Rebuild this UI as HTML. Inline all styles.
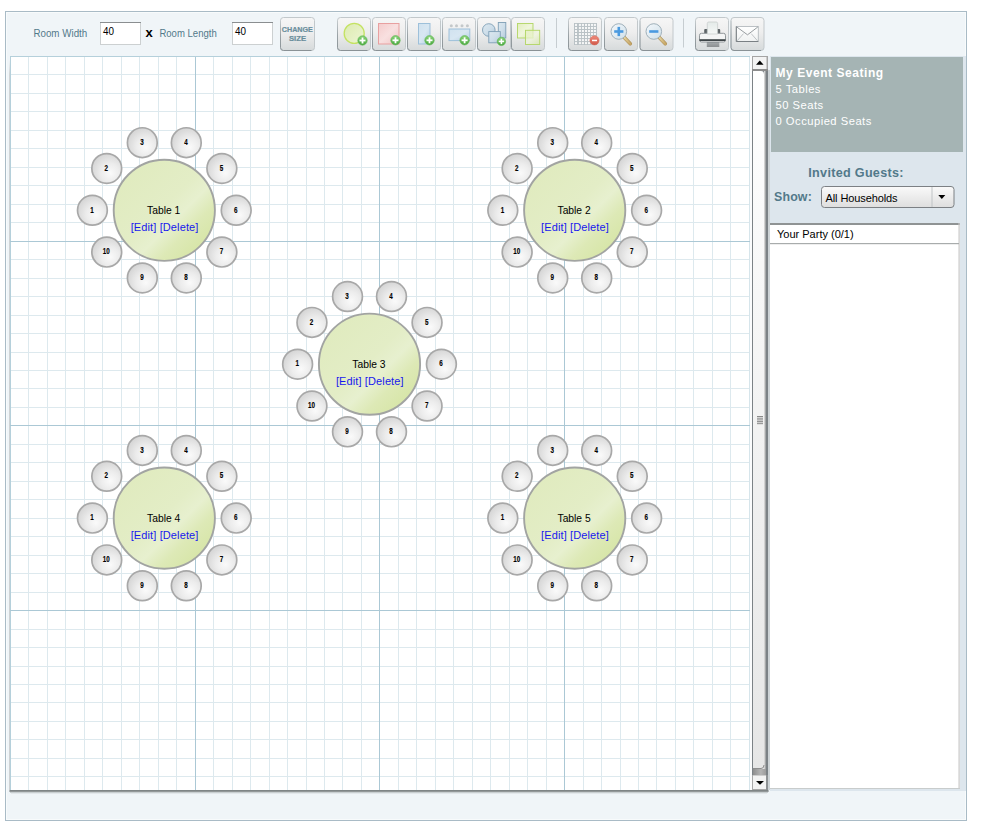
<!DOCTYPE html>
<html><head><meta charset="utf-8"><style>
html,body{margin:0;padding:0;background:#fff;width:994px;height:822px;overflow:hidden}
svg{display:block}
</style></head><body>
<svg width="994" height="822" viewBox="0 0 994 822">

<defs>
 <linearGradient id="btn" x1="0" y1="0" x2="0" y2="1">
  <stop offset="0" stop-color="#f6f6f6"/><stop offset="0.45" stop-color="#eeeeee"/><stop offset="1" stop-color="#d6dadb"/>
 </linearGradient>
 <linearGradient id="bedge" x1="0" y1="0" x2="0" y2="1">
  <stop offset="0" stop-color="#c4cacd"/><stop offset="0.5" stop-color="#9aa2a6"/><stop offset="1" stop-color="#8a9296"/>
 </linearGradient>
 <linearGradient id="paper" x1="0" y1="0" x2="0" y2="1">
  <stop offset="0" stop-color="#e4eae8"/><stop offset="1" stop-color="#f6f8f7"/>
 </linearGradient>
 <linearGradient id="tray" x1="0" y1="0" x2="0" y2="1">
  <stop offset="0" stop-color="#6a7074"/><stop offset="0.3" stop-color="#a4a8aa"/><stop offset="1" stop-color="#8a8e90"/>
 </linearGradient>
 <linearGradient id="tbl" x1="0" y1="0" x2="1" y2="1">
  <stop offset="0" stop-color="#dfeabc"/><stop offset="0.48" stop-color="#e3edc6"/>
  <stop offset="0.6" stop-color="#e7f0cf"/><stop offset="0.72" stop-color="#dde9b6"/><stop offset="1" stop-color="#d1e29a"/>
 </linearGradient>
 <radialGradient id="seat" cx="0.6" cy="0.62" r="0.62" fx="0.62" fy="0.66">
  <stop offset="0" stop-color="#fafafa"/><stop offset="0.5" stop-color="#ececec"/><stop offset="1" stop-color="#d6d6d6"/>
 </radialGradient>
 <linearGradient id="gcirc" x1="0" y1="0" x2="1" y2="1">
  <stop offset="0" stop-color="#dcebb0"/><stop offset="1" stop-color="#eef5d4"/>
 </linearGradient>
 <linearGradient id="pink" x1="0" y1="0" x2="1" y2="1">
  <stop offset="0" stop-color="#f4cccc"/><stop offset="0.5" stop-color="#f8e0e0"/><stop offset="1" stop-color="#f0c4c4"/>
 </linearGradient>
 <linearGradient id="blue" x1="0" y1="0" x2="1" y2="1">
  <stop offset="0" stop-color="#d0e2ef"/><stop offset="0.5" stop-color="#d8e7f2"/><stop offset="1" stop-color="#b6d0e4"/>
 </linearGradient>
 <linearGradient id="plus" x1="0" y1="0" x2="0" y2="1">
  <stop offset="0" stop-color="#8cd47a"/><stop offset="1" stop-color="#48a83e"/>
 </linearGradient>
 <linearGradient id="minus" x1="0" y1="0" x2="0" y2="1">
  <stop offset="0" stop-color="#f07a6a"/><stop offset="1" stop-color="#c8463a"/>
 </linearGradient>
 <linearGradient id="sel" x1="0" y1="0" x2="0" y2="1">
  <stop offset="0" stop-color="#fafafa"/><stop offset="1" stop-color="#dedede"/>
 </linearGradient>
 <linearGradient id="thumb" x1="0" y1="0" x2="1" y2="0">
  <stop offset="0" stop-color="#fdfdfd"/><stop offset="0.6" stop-color="#f4f4f4"/><stop offset="0.75" stop-color="#c8c8c8"/><stop offset="0.9" stop-color="#8c8c8c"/><stop offset="1" stop-color="#b8b8b8"/>
 </linearGradient>
 <linearGradient id="lens" x1="0" y1="0" x2="1" y2="1">
  <stop offset="0" stop-color="#f4f8fb"/><stop offset="1" stop-color="#cfe0ea"/>
 </linearGradient>
 <linearGradient id="handle" x1="0" y1="0" x2="1" y2="1">
  <stop offset="0" stop-color="#e8d8a8"/><stop offset="1" stop-color="#c8a868"/>
 </linearGradient>
 <filter id="gshadow" x="-5%" y="-5%" width="110%" height="110%">
  <feGaussianBlur stdDeviation="0.9"/>
 </filter>
</defs>
<rect x="5.5" y="11.5" width="961" height="809" fill="#f0f5f8" stroke="#a9bbc6" stroke-width="1"/>
<rect x="6.5" y="12.5" width="959" height="807" fill="none" stroke="#f8fbfc" stroke-width="1"/>
<text transform="translate(33.4,36.9) scale(0.89,1)" font-family="Liberation Sans, sans-serif" font-size="11" fill="#52798a">Room Width</text>
<text transform="translate(159.4,36.9) scale(0.87,1)" font-family="Liberation Sans, sans-serif" font-size="11" fill="#52798a">Room Length</text>
<text x="145.5" y="36.8" font-family="Liberation Sans, sans-serif" font-size="13" font-weight="bold" fill="#000">x</text>
<rect x="100" y="22" width="41" height="23" fill="#fff"/>
<rect x="100.5" y="22.5" width="40" height="22" fill="none" stroke="#ccd0d1"/>
<line x1="100" y1="22.5" x2="141" y2="22.5" stroke="#8a8e90"/>
<text transform="translate(103,34.7) scale(0.9,1)" font-family="Liberation Sans, sans-serif" font-size="11" fill="#000">40</text>
<rect x="232" y="22" width="41" height="23" fill="#fff"/>
<rect x="232.5" y="22.5" width="40" height="22" fill="none" stroke="#ccd0d1"/>
<line x1="232" y1="22.5" x2="273" y2="22.5" stroke="#8a8e90"/>
<text transform="translate(235,34.7) scale(0.9,1)" font-family="Liberation Sans, sans-serif" font-size="11" fill="#000">40</text>
<rect x="280.5" y="17.5" width="34" height="33" rx="3" fill="url(#btn)" stroke="#c2c8cb"/>
<path d="M280.5,20.5 L280.5,47.5 Q280.5,50.5 283.5,50.5 L311.5,50.5" fill="none" stroke="url(#bedge)" stroke-width="1"/>
<text x="297.3" y="32.2" font-family="Liberation Sans, sans-serif" font-size="7.2" font-weight="bold" fill="#6a8e9c" stroke="#6a8e9c" stroke-width="0.2" text-anchor="middle" textLength="31" lengthAdjust="spacingAndGlyphs">CHANGE</text>
<text x="297.5" y="40.9" font-family="Liberation Sans, sans-serif" font-size="7.2" font-weight="bold" fill="#6a8e9c" stroke="#6a8e9c" stroke-width="0.2" text-anchor="middle" textLength="17" lengthAdjust="spacingAndGlyphs">SIZE</text>
<rect x="337.5" y="17.5" width="33" height="33" rx="3" fill="url(#btn)" stroke="#c2c8cb"/>
<path d="M337.5,20.5 L337.5,47.5 Q337.5,50.5 340.5,50.5 L367.5,50.5" fill="none" stroke="url(#bedge)" stroke-width="1"/>
<rect x="372.5" y="17.5" width="33" height="33" rx="3" fill="url(#btn)" stroke="#c2c8cb"/>
<path d="M372.5,20.5 L372.5,47.5 Q372.5,50.5 375.5,50.5 L402.5,50.5" fill="none" stroke="url(#bedge)" stroke-width="1"/>
<rect x="407.5" y="17.5" width="33" height="33" rx="3" fill="url(#btn)" stroke="#c2c8cb"/>
<path d="M407.5,20.5 L407.5,47.5 Q407.5,50.5 410.5,50.5 L437.5,50.5" fill="none" stroke="url(#bedge)" stroke-width="1"/>
<rect x="442.5" y="17.5" width="33" height="33" rx="3" fill="url(#btn)" stroke="#c2c8cb"/>
<path d="M442.5,20.5 L442.5,47.5 Q442.5,50.5 445.5,50.5 L472.5,50.5" fill="none" stroke="url(#bedge)" stroke-width="1"/>
<rect x="477.5" y="17.5" width="33" height="33" rx="3" fill="url(#btn)" stroke="#c2c8cb"/>
<path d="M477.5,20.5 L477.5,47.5 Q477.5,50.5 480.5,50.5 L507.5,50.5" fill="none" stroke="url(#bedge)" stroke-width="1"/>
<rect x="511.5" y="17.5" width="33" height="33" rx="3" fill="url(#btn)" stroke="#c2c8cb"/>
<path d="M511.5,20.5 L511.5,47.5 Q511.5,50.5 514.5,50.5 L541.5,50.5" fill="none" stroke="url(#bedge)" stroke-width="1"/>
<rect x="568.5" y="17.5" width="33" height="33" rx="3" fill="url(#btn)" stroke="#c2c8cb"/>
<path d="M568.5,20.5 L568.5,47.5 Q568.5,50.5 571.5,50.5 L598.5,50.5" fill="none" stroke="url(#bedge)" stroke-width="1"/>
<rect x="604.5" y="17.5" width="33" height="33" rx="3" fill="url(#btn)" stroke="#c2c8cb"/>
<path d="M604.5,20.5 L604.5,47.5 Q604.5,50.5 607.5,50.5 L634.5,50.5" fill="none" stroke="url(#bedge)" stroke-width="1"/>
<rect x="640.0" y="17.5" width="33" height="33" rx="3" fill="url(#btn)" stroke="#c2c8cb"/>
<path d="M640.0,20.5 L640.0,47.5 Q640.0,50.5 643.0,50.5 L670.0,50.5" fill="none" stroke="url(#bedge)" stroke-width="1"/>
<rect x="695.5" y="17.5" width="33" height="33" rx="3" fill="url(#btn)" stroke="#c2c8cb"/>
<path d="M695.5,20.5 L695.5,47.5 Q695.5,50.5 698.5,50.5 L725.5,50.5" fill="none" stroke="url(#bedge)" stroke-width="1"/>
<rect x="731.0" y="17.5" width="33" height="33" rx="3" fill="url(#btn)" stroke="#c2c8cb"/>
<path d="M731.0,20.5 L731.0,47.5 Q731.0,50.5 734.0,50.5 L761.0,50.5" fill="none" stroke="url(#bedge)" stroke-width="1"/>
<rect x="556" y="18" width="1" height="30" fill="#c6cdd1"/>
<rect x="683" y="18.5" width="1" height="29" fill="#c6cdd1"/>
<circle cx="354.2" cy="33.4" r="10" fill="url(#gcirc)" stroke="#c4e262" stroke-width="1.3"/>
<circle cx="362.5" cy="40.5" r="4.7" fill="url(#plus)" stroke="#5cb450" stroke-width="0.6"/>
<rect x="359.5" y="39.6" width="6" height="1.8" fill="#fff"/>
<rect x="361.6" y="37.5" width="1.8" height="6" fill="#fff"/>
<rect x="378.5" y="23.5" width="20.5" height="20.5" fill="url(#pink)" stroke="#e8a0a0" stroke-width="1"/>
<circle cx="395.5" cy="40.3" r="4.7" fill="url(#plus)" stroke="#5cb450" stroke-width="0.6"/>
<rect x="392.5" y="39.4" width="6" height="1.8" fill="#fff"/>
<rect x="394.6" y="37.3" width="1.8" height="6" fill="#fff"/>
<rect x="418.5" y="23.5" width="11.5" height="20.5" fill="url(#blue)" stroke="#9dc0da" stroke-width="1"/>
<circle cx="429.5" cy="40.3" r="4.7" fill="url(#plus)" stroke="#5cb450" stroke-width="0.6"/>
<rect x="426.5" y="39.4" width="6" height="1.8" fill="#fff"/>
<rect x="428.6" y="37.3" width="1.8" height="6" fill="#fff"/>
<circle cx="451.3" cy="25.8" r="1.5" fill="#c4c8ca"/>
<circle cx="456.5" cy="25.8" r="1.5" fill="#c4c8ca"/>
<circle cx="462" cy="25.8" r="1.5" fill="#c4c8ca"/>
<circle cx="467.4" cy="25.8" r="1.5" fill="#c4c8ca"/>
<rect x="449" y="29" width="20.8" height="11.6" fill="url(#blue)" stroke="#9dc0da" stroke-width="1"/>
<circle cx="464.6" cy="40.3" r="4.7" fill="url(#plus)" stroke="#5cb450" stroke-width="0.6"/>
<rect x="461.6" y="39.4" width="6" height="1.8" fill="#fff"/>
<rect x="463.70000000000005" y="37.3" width="1.8" height="6" fill="#fff"/>
<defs><linearGradient id="cmb" x1="0" y1="0" x2="1" y2="1"><stop offset="0" stop-color="#dce8f0"/><stop offset="0.5" stop-color="#cfdfea"/><stop offset="1" stop-color="#b4cadb"/></linearGradient>
<linearGradient id="sq" x1="0" y1="0" x2="1" y2="1"><stop offset="0" stop-color="#e2eebc"/><stop offset="0.5" stop-color="#f0f6dc"/><stop offset="1" stop-color="#d8e8a8"/></linearGradient></defs>
<circle cx="488.8" cy="30" r="6.3" fill="url(#cmb)" stroke="#7f9fb6" stroke-width="0.9"/>
<rect x="498.3" y="22.5" width="7.5" height="15.5" fill="url(#cmb)" stroke="#7f9fb6" stroke-width="0.9"/>
<rect x="488.8" y="31.6" width="11.5" height="11.2" fill="url(#cmb)" stroke="#7f9fb6" stroke-width="0.9"/>
<circle cx="501.4" cy="41.4" r="4.2" fill="url(#plus)" stroke="#5cb450" stroke-width="0.6"/>
<rect x="498.7" y="40.6" width="5.4" height="1.6" fill="#fff"/><rect x="500.6" y="38.7" width="1.6" height="5.4" fill="#fff"/>
<rect x="517.5" y="23.5" width="15.5" height="14.5" fill="url(#sq)" stroke="#b2d664" stroke-width="0.9"/>
<rect x="525.5" y="30.3" width="14.2" height="14.2" fill="url(#sq)" fill-opacity="0.7" stroke="#b2d664" stroke-width="0.9"/>
<rect x="574" y="23" width="23" height="22" fill="#b9c1c5"/>
<rect x="575" y="23.90" width="2.05" height="2.05" fill="#f6f7f7"/>
<rect x="575" y="26.93" width="2.05" height="2.05" fill="#f6f7f7"/>
<rect x="575" y="29.96" width="2.05" height="2.05" fill="#f6f7f7"/>
<rect x="575" y="32.99" width="2.05" height="2.05" fill="#f6f7f7"/>
<rect x="575" y="36.02" width="2.05" height="2.05" fill="#f6f7f7"/>
<rect x="575" y="39.05" width="2.05" height="2.05" fill="#f6f7f7"/>
<rect x="575" y="42.08" width="2.05" height="2.05" fill="#f6f7f7"/>
<rect x="578.9" y="23.90" width="2.05" height="2.05" fill="#f6f7f7"/>
<rect x="578.9" y="26.93" width="2.05" height="2.05" fill="#f6f7f7"/>
<rect x="578.9" y="29.96" width="2.05" height="2.05" fill="#f6f7f7"/>
<rect x="578.9" y="32.99" width="2.05" height="2.05" fill="#f6f7f7"/>
<rect x="578.9" y="36.02" width="2.05" height="2.05" fill="#f6f7f7"/>
<rect x="578.9" y="39.05" width="2.05" height="2.05" fill="#f6f7f7"/>
<rect x="578.9" y="42.08" width="2.05" height="2.05" fill="#f6f7f7"/>
<rect x="581.9" y="23.90" width="2.05" height="2.05" fill="#f6f7f7"/>
<rect x="581.9" y="26.93" width="2.05" height="2.05" fill="#f6f7f7"/>
<rect x="581.9" y="29.96" width="2.05" height="2.05" fill="#f6f7f7"/>
<rect x="581.9" y="32.99" width="2.05" height="2.05" fill="#f6f7f7"/>
<rect x="581.9" y="36.02" width="2.05" height="2.05" fill="#f6f7f7"/>
<rect x="581.9" y="39.05" width="2.05" height="2.05" fill="#f6f7f7"/>
<rect x="581.9" y="42.08" width="2.05" height="2.05" fill="#f6f7f7"/>
<rect x="585" y="23.90" width="2.05" height="2.05" fill="#f6f7f7"/>
<rect x="585" y="26.93" width="2.05" height="2.05" fill="#f6f7f7"/>
<rect x="585" y="29.96" width="2.05" height="2.05" fill="#f6f7f7"/>
<rect x="585" y="32.99" width="2.05" height="2.05" fill="#f6f7f7"/>
<rect x="585" y="36.02" width="2.05" height="2.05" fill="#f6f7f7"/>
<rect x="585" y="39.05" width="2.05" height="2.05" fill="#f6f7f7"/>
<rect x="585" y="42.08" width="2.05" height="2.05" fill="#f6f7f7"/>
<rect x="588" y="23.90" width="2.05" height="2.05" fill="#f6f7f7"/>
<rect x="588" y="26.93" width="2.05" height="2.05" fill="#f6f7f7"/>
<rect x="588" y="29.96" width="2.05" height="2.05" fill="#f6f7f7"/>
<rect x="588" y="32.99" width="2.05" height="2.05" fill="#f6f7f7"/>
<rect x="588" y="36.02" width="2.05" height="2.05" fill="#f6f7f7"/>
<rect x="588" y="39.05" width="2.05" height="2.05" fill="#f6f7f7"/>
<rect x="588" y="42.08" width="2.05" height="2.05" fill="#f6f7f7"/>
<rect x="591" y="23.90" width="2.05" height="2.05" fill="#f6f7f7"/>
<rect x="591" y="26.93" width="2.05" height="2.05" fill="#f6f7f7"/>
<rect x="591" y="29.96" width="2.05" height="2.05" fill="#f6f7f7"/>
<rect x="591" y="32.99" width="2.05" height="2.05" fill="#f6f7f7"/>
<rect x="591" y="36.02" width="2.05" height="2.05" fill="#f6f7f7"/>
<rect x="591" y="39.05" width="2.05" height="2.05" fill="#f6f7f7"/>
<rect x="591" y="42.08" width="2.05" height="2.05" fill="#f6f7f7"/>
<rect x="593.9" y="23.90" width="2.05" height="2.05" fill="#f6f7f7"/>
<rect x="593.9" y="26.93" width="2.05" height="2.05" fill="#f6f7f7"/>
<rect x="593.9" y="29.96" width="2.05" height="2.05" fill="#f6f7f7"/>
<rect x="593.9" y="32.99" width="2.05" height="2.05" fill="#f6f7f7"/>
<rect x="593.9" y="36.02" width="2.05" height="2.05" fill="#f6f7f7"/>
<rect x="593.9" y="39.05" width="2.05" height="2.05" fill="#f6f7f7"/>
<rect x="593.9" y="42.08" width="2.05" height="2.05" fill="#f6f7f7"/>
<defs><linearGradient id="mn2" x1="0" y1="0" x2="0" y2="1"><stop offset="0" stop-color="#ee8a7a"/><stop offset="1" stop-color="#d05848"/></linearGradient></defs>
<circle cx="594.5" cy="40.4" r="4.6" fill="url(#mn2)" stroke="#d86a5c" stroke-width="0.5"/>
<rect x="592" y="39.7" width="5" height="1.5" fill="#fff"/>
<line x1="623.3" y1="36.5" x2="630.3" y2="43.8" stroke="#a88a50" stroke-width="3.4" stroke-linecap="round"/>
<line x1="623.3" y1="36.5" x2="630.3" y2="43.8" stroke="url(#handle)" stroke-width="2.4" stroke-linecap="round"/>
<circle cx="618.8" cy="31.5" r="7.8" fill="url(#lens)" stroke="#9fb0ba" stroke-width="1"/>
<rect x="614.1999999999999" y="30.2" width="9.2" height="2.6" fill="#4a9ae0"/>
<rect x="617.5" y="26.9" width="2.6" height="9.2" fill="#4a9ae0"/>
<line x1="658.3" y1="36.5" x2="665.3" y2="43.8" stroke="#a88a50" stroke-width="3.4" stroke-linecap="round"/>
<line x1="658.3" y1="36.5" x2="665.3" y2="43.8" stroke="url(#handle)" stroke-width="2.4" stroke-linecap="round"/>
<circle cx="653.8" cy="31.5" r="7.8" fill="url(#lens)" stroke="#9fb0ba" stroke-width="1"/>
<rect x="649.1999999999999" y="30.2" width="9.2" height="2.6" fill="#4a9ae0"/>
<rect x="704.2" y="29" width="16" height="5" rx="1" fill="#5c6366"/>
<rect x="706.8" y="41" width="12.5" height="6" fill="url(#tray)"/>
<rect x="699.5" y="33.3" width="26" height="8.7" rx="2" fill="#f4f5f5" stroke="#868c90" stroke-width="0.9"/>
<rect x="699.5" y="39.2" width="26" height="1.8" fill="#3e4548"/>
<path d="M707.3,34 L707.3,23.5 Q707.3,22 708.8,22 L716.2,22 Q717.6,22 717.6,23.5 L717.6,34 Z" fill="url(#paper)" stroke="#c4cac8" stroke-width="0.7"/>
<defs><linearGradient id="env" x1="0" y1="0" x2="0" y2="1"><stop offset="0" stop-color="#ffffff"/><stop offset="1" stop-color="#f0f2f2"/></linearGradient></defs>
<rect x="736.3" y="26.5" width="22" height="15" fill="url(#env)" stroke="#b4babe" stroke-width="0.9"/>
<path d="M736.3,41.5 L736.3,26.5" stroke="#6e7478" stroke-width="0.9"/>
<path d="M736.3,41.5 L758.3,41.5" stroke="#7a8084" stroke-width="1"/>
<path d="M736.8,27 L747.5,34.8 L757.8,27" fill="none" stroke="#7e8488" stroke-width="0.8"/>
<path d="M737.2,40.8 L743.5,33.6 M757.5,40.8 L751.2,33.6" fill="none" stroke="#a8aeb2" stroke-width="0.7"/>
<defs><linearGradient id="lsh" x1="0" y1="0" x2="0" y2="1"><stop offset="0" stop-color="#f0f5f8"/><stop offset="0.02" stop-color="#d0d4d6"/><stop offset="1" stop-color="#cdd1d3"/></linearGradient></defs>
<rect x="9" y="60" width="1" height="731" fill="url(#lsh)"/>
<rect x="10" y="790" width="758" height="1" fill="#7f8586"/>
<rect x="10" y="791" width="758" height="1" fill="#939899"/>
<rect x="10" y="792" width="758" height="1" fill="#c9cfd1"/>
<rect x="11" y="793" width="756" height="1" fill="#e3e8eb"/>
<rect x="9" y="790" width="1" height="2" fill="#b4babc"/>
<rect x="768" y="790" width="1" height="2" fill="#b4babc"/>
<rect x="750" y="56" width="2" height="734" fill="#f0f5f8"/>
<rect x="10" y="56" width="740" height="734" fill="#fff"/>
<rect x="28" y="56" width="1" height="734" fill="#dde9ee"/>
<rect x="47" y="56" width="1" height="734" fill="#dde9ee"/>
<rect x="65" y="56" width="1" height="734" fill="#dde9ee"/>
<rect x="84" y="56" width="1" height="734" fill="#dde9ee"/>
<rect x="102" y="56" width="1" height="734" fill="#dde9ee"/>
<rect x="121" y="56" width="1" height="734" fill="#dde9ee"/>
<rect x="139" y="56" width="1" height="734" fill="#dde9ee"/>
<rect x="158" y="56" width="1" height="734" fill="#dde9ee"/>
<rect x="176" y="56" width="1" height="734" fill="#dde9ee"/>
<rect x="213" y="56" width="1" height="734" fill="#dde9ee"/>
<rect x="232" y="56" width="1" height="734" fill="#dde9ee"/>
<rect x="250" y="56" width="1" height="734" fill="#dde9ee"/>
<rect x="269" y="56" width="1" height="734" fill="#dde9ee"/>
<rect x="287" y="56" width="1" height="734" fill="#dde9ee"/>
<rect x="306" y="56" width="1" height="734" fill="#dde9ee"/>
<rect x="324" y="56" width="1" height="734" fill="#dde9ee"/>
<rect x="342" y="56" width="1" height="734" fill="#dde9ee"/>
<rect x="361" y="56" width="1" height="734" fill="#dde9ee"/>
<rect x="398" y="56" width="1" height="734" fill="#dde9ee"/>
<rect x="416" y="56" width="1" height="734" fill="#dde9ee"/>
<rect x="435" y="56" width="1" height="734" fill="#dde9ee"/>
<rect x="453" y="56" width="1" height="734" fill="#dde9ee"/>
<rect x="472" y="56" width="1" height="734" fill="#dde9ee"/>
<rect x="490" y="56" width="1" height="734" fill="#dde9ee"/>
<rect x="509" y="56" width="1" height="734" fill="#dde9ee"/>
<rect x="527" y="56" width="1" height="734" fill="#dde9ee"/>
<rect x="546" y="56" width="1" height="734" fill="#dde9ee"/>
<rect x="583" y="56" width="1" height="734" fill="#dde9ee"/>
<rect x="601" y="56" width="1" height="734" fill="#dde9ee"/>
<rect x="620" y="56" width="1" height="734" fill="#dde9ee"/>
<rect x="638" y="56" width="1" height="734" fill="#dde9ee"/>
<rect x="656" y="56" width="1" height="734" fill="#dde9ee"/>
<rect x="675" y="56" width="1" height="734" fill="#dde9ee"/>
<rect x="693" y="56" width="1" height="734" fill="#dde9ee"/>
<rect x="712" y="56" width="1" height="734" fill="#dde9ee"/>
<rect x="730" y="56" width="1" height="734" fill="#dde9ee"/>
<rect x="10" y="74" width="740" height="1" fill="#dde9ee"/>
<rect x="10" y="93" width="740" height="1" fill="#dde9ee"/>
<rect x="10" y="111" width="740" height="1" fill="#dde9ee"/>
<rect x="10" y="130" width="740" height="1" fill="#dde9ee"/>
<rect x="10" y="148" width="740" height="1" fill="#dde9ee"/>
<rect x="10" y="167" width="740" height="1" fill="#dde9ee"/>
<rect x="10" y="185" width="740" height="1" fill="#dde9ee"/>
<rect x="10" y="204" width="740" height="1" fill="#dde9ee"/>
<rect x="10" y="222" width="740" height="1" fill="#dde9ee"/>
<rect x="10" y="259" width="740" height="1" fill="#dde9ee"/>
<rect x="10" y="278" width="740" height="1" fill="#dde9ee"/>
<rect x="10" y="296" width="740" height="1" fill="#dde9ee"/>
<rect x="10" y="315" width="740" height="1" fill="#dde9ee"/>
<rect x="10" y="333" width="740" height="1" fill="#dde9ee"/>
<rect x="10" y="352" width="740" height="1" fill="#dde9ee"/>
<rect x="10" y="370" width="740" height="1" fill="#dde9ee"/>
<rect x="10" y="388" width="740" height="1" fill="#dde9ee"/>
<rect x="10" y="407" width="740" height="1" fill="#dde9ee"/>
<rect x="10" y="444" width="740" height="1" fill="#dde9ee"/>
<rect x="10" y="462" width="740" height="1" fill="#dde9ee"/>
<rect x="10" y="481" width="740" height="1" fill="#dde9ee"/>
<rect x="10" y="499" width="740" height="1" fill="#dde9ee"/>
<rect x="10" y="518" width="740" height="1" fill="#dde9ee"/>
<rect x="10" y="536" width="740" height="1" fill="#dde9ee"/>
<rect x="10" y="555" width="740" height="1" fill="#dde9ee"/>
<rect x="10" y="573" width="740" height="1" fill="#dde9ee"/>
<rect x="10" y="592" width="740" height="1" fill="#dde9ee"/>
<rect x="10" y="629" width="740" height="1" fill="#dde9ee"/>
<rect x="10" y="647" width="740" height="1" fill="#dde9ee"/>
<rect x="10" y="666" width="740" height="1" fill="#dde9ee"/>
<rect x="10" y="684" width="740" height="1" fill="#dde9ee"/>
<rect x="10" y="702" width="740" height="1" fill="#dde9ee"/>
<rect x="10" y="721" width="740" height="1" fill="#dde9ee"/>
<rect x="10" y="739" width="740" height="1" fill="#dde9ee"/>
<rect x="10" y="758" width="740" height="1" fill="#dde9ee"/>
<rect x="10" y="776" width="740" height="1" fill="#dde9ee"/>
<rect x="10" y="56" width="1" height="734" fill="#b5d0db"/>
<rect x="195" y="56" width="1" height="734" fill="#abc8d5"/>
<rect x="379" y="56" width="1" height="734" fill="#abc8d5"/>
<rect x="564" y="56" width="1" height="734" fill="#abc8d5"/>
<rect x="749" y="56" width="1" height="734" fill="#d6e5eb"/>
<rect x="10" y="56" width="740" height="1" fill="#b5d0db"/>
<rect x="10" y="241" width="740" height="1" fill="#abc8d5"/>
<rect x="10" y="425" width="740" height="1" fill="#abc8d5"/>
<rect x="10" y="610" width="740" height="1" fill="#abc8d5"/>
<circle cx="92.40" cy="210.30" r="14.9" fill="url(#seat)" stroke="#a8a8a8" stroke-width="1.7"/>
<text transform="translate(92.00,212.50) scale(0.74,1)" font-family="Liberation Sans, sans-serif" font-size="8.5" font-weight="bold" fill="#000" stroke="#000" stroke-width="0.15" text-anchor="middle">1</text>
<circle cx="106.74" cy="168.48" r="14.9" fill="url(#seat)" stroke="#a8a8a8" stroke-width="1.7"/>
<text transform="translate(106.34,170.68) scale(0.74,1)" font-family="Liberation Sans, sans-serif" font-size="8.5" font-weight="bold" fill="#000" stroke="#000" stroke-width="0.15" text-anchor="middle">2</text>
<circle cx="142.31" cy="142.63" r="14.9" fill="url(#seat)" stroke="#a8a8a8" stroke-width="1.7"/>
<text transform="translate(141.91,144.83) scale(0.74,1)" font-family="Liberation Sans, sans-serif" font-size="8.5" font-weight="bold" fill="#000" stroke="#000" stroke-width="0.15" text-anchor="middle">3</text>
<circle cx="186.29" cy="142.63" r="14.9" fill="url(#seat)" stroke="#a8a8a8" stroke-width="1.7"/>
<text transform="translate(185.89,144.83) scale(0.74,1)" font-family="Liberation Sans, sans-serif" font-size="8.5" font-weight="bold" fill="#000" stroke="#000" stroke-width="0.15" text-anchor="middle">4</text>
<circle cx="221.86" cy="168.48" r="14.9" fill="url(#seat)" stroke="#a8a8a8" stroke-width="1.7"/>
<text transform="translate(221.46,170.68) scale(0.74,1)" font-family="Liberation Sans, sans-serif" font-size="8.5" font-weight="bold" fill="#000" stroke="#000" stroke-width="0.15" text-anchor="middle">5</text>
<circle cx="236.20" cy="210.30" r="14.9" fill="url(#seat)" stroke="#a8a8a8" stroke-width="1.7"/>
<text transform="translate(235.80,212.50) scale(0.74,1)" font-family="Liberation Sans, sans-serif" font-size="8.5" font-weight="bold" fill="#000" stroke="#000" stroke-width="0.15" text-anchor="middle">6</text>
<circle cx="221.86" cy="252.12" r="14.9" fill="url(#seat)" stroke="#a8a8a8" stroke-width="1.7"/>
<text transform="translate(221.46,254.32) scale(0.74,1)" font-family="Liberation Sans, sans-serif" font-size="8.5" font-weight="bold" fill="#000" stroke="#000" stroke-width="0.15" text-anchor="middle">7</text>
<circle cx="186.29" cy="277.97" r="14.9" fill="url(#seat)" stroke="#a8a8a8" stroke-width="1.7"/>
<text transform="translate(185.89,280.17) scale(0.74,1)" font-family="Liberation Sans, sans-serif" font-size="8.5" font-weight="bold" fill="#000" stroke="#000" stroke-width="0.15" text-anchor="middle">8</text>
<circle cx="142.31" cy="277.97" r="14.9" fill="url(#seat)" stroke="#a8a8a8" stroke-width="1.7"/>
<text transform="translate(141.91,280.17) scale(0.74,1)" font-family="Liberation Sans, sans-serif" font-size="8.5" font-weight="bold" fill="#000" stroke="#000" stroke-width="0.15" text-anchor="middle">9</text>
<circle cx="106.74" cy="252.12" r="14.9" fill="url(#seat)" stroke="#a8a8a8" stroke-width="1.7"/>
<text transform="translate(106.34,254.32) scale(0.74,1)" font-family="Liberation Sans, sans-serif" font-size="8.5" font-weight="bold" fill="#000" stroke="#000" stroke-width="0.15" text-anchor="middle">10</text>
<circle cx="164.3" cy="210.3" r="50.6" fill="url(#tbl)" stroke="#a2a4a2" stroke-width="1.9"/>
<text x="163.70000000000002" y="214.0" font-family="Liberation Sans, sans-serif" font-size="10.3" fill="#000" text-anchor="middle">Table 1</text>
<text x="164.60000000000002" y="230.9" font-family="Liberation Sans, sans-serif" font-size="11" letter-spacing="0.12" fill="#1818ee" text-anchor="middle">[Edit] [Delete]</text>
<circle cx="502.80" cy="210.30" r="14.9" fill="url(#seat)" stroke="#a8a8a8" stroke-width="1.7"/>
<text transform="translate(502.40,212.50) scale(0.74,1)" font-family="Liberation Sans, sans-serif" font-size="8.5" font-weight="bold" fill="#000" stroke="#000" stroke-width="0.15" text-anchor="middle">1</text>
<circle cx="517.14" cy="168.48" r="14.9" fill="url(#seat)" stroke="#a8a8a8" stroke-width="1.7"/>
<text transform="translate(516.74,170.68) scale(0.74,1)" font-family="Liberation Sans, sans-serif" font-size="8.5" font-weight="bold" fill="#000" stroke="#000" stroke-width="0.15" text-anchor="middle">2</text>
<circle cx="552.71" cy="142.63" r="14.9" fill="url(#seat)" stroke="#a8a8a8" stroke-width="1.7"/>
<text transform="translate(552.31,144.83) scale(0.74,1)" font-family="Liberation Sans, sans-serif" font-size="8.5" font-weight="bold" fill="#000" stroke="#000" stroke-width="0.15" text-anchor="middle">3</text>
<circle cx="596.69" cy="142.63" r="14.9" fill="url(#seat)" stroke="#a8a8a8" stroke-width="1.7"/>
<text transform="translate(596.29,144.83) scale(0.74,1)" font-family="Liberation Sans, sans-serif" font-size="8.5" font-weight="bold" fill="#000" stroke="#000" stroke-width="0.15" text-anchor="middle">4</text>
<circle cx="632.26" cy="168.48" r="14.9" fill="url(#seat)" stroke="#a8a8a8" stroke-width="1.7"/>
<text transform="translate(631.86,170.68) scale(0.74,1)" font-family="Liberation Sans, sans-serif" font-size="8.5" font-weight="bold" fill="#000" stroke="#000" stroke-width="0.15" text-anchor="middle">5</text>
<circle cx="646.60" cy="210.30" r="14.9" fill="url(#seat)" stroke="#a8a8a8" stroke-width="1.7"/>
<text transform="translate(646.20,212.50) scale(0.74,1)" font-family="Liberation Sans, sans-serif" font-size="8.5" font-weight="bold" fill="#000" stroke="#000" stroke-width="0.15" text-anchor="middle">6</text>
<circle cx="632.26" cy="252.12" r="14.9" fill="url(#seat)" stroke="#a8a8a8" stroke-width="1.7"/>
<text transform="translate(631.86,254.32) scale(0.74,1)" font-family="Liberation Sans, sans-serif" font-size="8.5" font-weight="bold" fill="#000" stroke="#000" stroke-width="0.15" text-anchor="middle">7</text>
<circle cx="596.69" cy="277.97" r="14.9" fill="url(#seat)" stroke="#a8a8a8" stroke-width="1.7"/>
<text transform="translate(596.29,280.17) scale(0.74,1)" font-family="Liberation Sans, sans-serif" font-size="8.5" font-weight="bold" fill="#000" stroke="#000" stroke-width="0.15" text-anchor="middle">8</text>
<circle cx="552.71" cy="277.97" r="14.9" fill="url(#seat)" stroke="#a8a8a8" stroke-width="1.7"/>
<text transform="translate(552.31,280.17) scale(0.74,1)" font-family="Liberation Sans, sans-serif" font-size="8.5" font-weight="bold" fill="#000" stroke="#000" stroke-width="0.15" text-anchor="middle">9</text>
<circle cx="517.14" cy="252.12" r="14.9" fill="url(#seat)" stroke="#a8a8a8" stroke-width="1.7"/>
<text transform="translate(516.74,254.32) scale(0.74,1)" font-family="Liberation Sans, sans-serif" font-size="8.5" font-weight="bold" fill="#000" stroke="#000" stroke-width="0.15" text-anchor="middle">10</text>
<circle cx="574.7" cy="210.3" r="50.6" fill="url(#tbl)" stroke="#a2a4a2" stroke-width="1.9"/>
<text x="574.1" y="214.0" font-family="Liberation Sans, sans-serif" font-size="10.3" fill="#000" text-anchor="middle">Table 2</text>
<text x="575.0" y="230.9" font-family="Liberation Sans, sans-serif" font-size="11" letter-spacing="0.12" fill="#1818ee" text-anchor="middle">[Edit] [Delete]</text>
<circle cx="297.60" cy="364.20" r="14.9" fill="url(#seat)" stroke="#a8a8a8" stroke-width="1.7"/>
<text transform="translate(297.20,366.40) scale(0.74,1)" font-family="Liberation Sans, sans-serif" font-size="8.5" font-weight="bold" fill="#000" stroke="#000" stroke-width="0.15" text-anchor="middle">1</text>
<circle cx="311.94" cy="322.38" r="14.9" fill="url(#seat)" stroke="#a8a8a8" stroke-width="1.7"/>
<text transform="translate(311.54,324.58) scale(0.74,1)" font-family="Liberation Sans, sans-serif" font-size="8.5" font-weight="bold" fill="#000" stroke="#000" stroke-width="0.15" text-anchor="middle">2</text>
<circle cx="347.51" cy="296.53" r="14.9" fill="url(#seat)" stroke="#a8a8a8" stroke-width="1.7"/>
<text transform="translate(347.11,298.73) scale(0.74,1)" font-family="Liberation Sans, sans-serif" font-size="8.5" font-weight="bold" fill="#000" stroke="#000" stroke-width="0.15" text-anchor="middle">3</text>
<circle cx="391.49" cy="296.53" r="14.9" fill="url(#seat)" stroke="#a8a8a8" stroke-width="1.7"/>
<text transform="translate(391.09,298.73) scale(0.74,1)" font-family="Liberation Sans, sans-serif" font-size="8.5" font-weight="bold" fill="#000" stroke="#000" stroke-width="0.15" text-anchor="middle">4</text>
<circle cx="427.06" cy="322.38" r="14.9" fill="url(#seat)" stroke="#a8a8a8" stroke-width="1.7"/>
<text transform="translate(426.66,324.58) scale(0.74,1)" font-family="Liberation Sans, sans-serif" font-size="8.5" font-weight="bold" fill="#000" stroke="#000" stroke-width="0.15" text-anchor="middle">5</text>
<circle cx="441.40" cy="364.20" r="14.9" fill="url(#seat)" stroke="#a8a8a8" stroke-width="1.7"/>
<text transform="translate(441.00,366.40) scale(0.74,1)" font-family="Liberation Sans, sans-serif" font-size="8.5" font-weight="bold" fill="#000" stroke="#000" stroke-width="0.15" text-anchor="middle">6</text>
<circle cx="427.06" cy="406.02" r="14.9" fill="url(#seat)" stroke="#a8a8a8" stroke-width="1.7"/>
<text transform="translate(426.66,408.22) scale(0.74,1)" font-family="Liberation Sans, sans-serif" font-size="8.5" font-weight="bold" fill="#000" stroke="#000" stroke-width="0.15" text-anchor="middle">7</text>
<circle cx="391.49" cy="431.87" r="14.9" fill="url(#seat)" stroke="#a8a8a8" stroke-width="1.7"/>
<text transform="translate(391.09,434.07) scale(0.74,1)" font-family="Liberation Sans, sans-serif" font-size="8.5" font-weight="bold" fill="#000" stroke="#000" stroke-width="0.15" text-anchor="middle">8</text>
<circle cx="347.51" cy="431.87" r="14.9" fill="url(#seat)" stroke="#a8a8a8" stroke-width="1.7"/>
<text transform="translate(347.11,434.07) scale(0.74,1)" font-family="Liberation Sans, sans-serif" font-size="8.5" font-weight="bold" fill="#000" stroke="#000" stroke-width="0.15" text-anchor="middle">9</text>
<circle cx="311.94" cy="406.02" r="14.9" fill="url(#seat)" stroke="#a8a8a8" stroke-width="1.7"/>
<text transform="translate(311.54,408.22) scale(0.74,1)" font-family="Liberation Sans, sans-serif" font-size="8.5" font-weight="bold" fill="#000" stroke="#000" stroke-width="0.15" text-anchor="middle">10</text>
<circle cx="369.5" cy="364.2" r="50.6" fill="url(#tbl)" stroke="#a2a4a2" stroke-width="1.9"/>
<text x="368.9" y="367.9" font-family="Liberation Sans, sans-serif" font-size="10.3" fill="#000" text-anchor="middle">Table 3</text>
<text x="369.8" y="384.8" font-family="Liberation Sans, sans-serif" font-size="11" letter-spacing="0.12" fill="#1818ee" text-anchor="middle">[Edit] [Delete]</text>
<circle cx="92.40" cy="518.10" r="14.9" fill="url(#seat)" stroke="#a8a8a8" stroke-width="1.7"/>
<text transform="translate(92.00,520.30) scale(0.74,1)" font-family="Liberation Sans, sans-serif" font-size="8.5" font-weight="bold" fill="#000" stroke="#000" stroke-width="0.15" text-anchor="middle">1</text>
<circle cx="106.74" cy="476.28" r="14.9" fill="url(#seat)" stroke="#a8a8a8" stroke-width="1.7"/>
<text transform="translate(106.34,478.48) scale(0.74,1)" font-family="Liberation Sans, sans-serif" font-size="8.5" font-weight="bold" fill="#000" stroke="#000" stroke-width="0.15" text-anchor="middle">2</text>
<circle cx="142.31" cy="450.43" r="14.9" fill="url(#seat)" stroke="#a8a8a8" stroke-width="1.7"/>
<text transform="translate(141.91,452.63) scale(0.74,1)" font-family="Liberation Sans, sans-serif" font-size="8.5" font-weight="bold" fill="#000" stroke="#000" stroke-width="0.15" text-anchor="middle">3</text>
<circle cx="186.29" cy="450.43" r="14.9" fill="url(#seat)" stroke="#a8a8a8" stroke-width="1.7"/>
<text transform="translate(185.89,452.63) scale(0.74,1)" font-family="Liberation Sans, sans-serif" font-size="8.5" font-weight="bold" fill="#000" stroke="#000" stroke-width="0.15" text-anchor="middle">4</text>
<circle cx="221.86" cy="476.28" r="14.9" fill="url(#seat)" stroke="#a8a8a8" stroke-width="1.7"/>
<text transform="translate(221.46,478.48) scale(0.74,1)" font-family="Liberation Sans, sans-serif" font-size="8.5" font-weight="bold" fill="#000" stroke="#000" stroke-width="0.15" text-anchor="middle">5</text>
<circle cx="236.20" cy="518.10" r="14.9" fill="url(#seat)" stroke="#a8a8a8" stroke-width="1.7"/>
<text transform="translate(235.80,520.30) scale(0.74,1)" font-family="Liberation Sans, sans-serif" font-size="8.5" font-weight="bold" fill="#000" stroke="#000" stroke-width="0.15" text-anchor="middle">6</text>
<circle cx="221.86" cy="559.92" r="14.9" fill="url(#seat)" stroke="#a8a8a8" stroke-width="1.7"/>
<text transform="translate(221.46,562.12) scale(0.74,1)" font-family="Liberation Sans, sans-serif" font-size="8.5" font-weight="bold" fill="#000" stroke="#000" stroke-width="0.15" text-anchor="middle">7</text>
<circle cx="186.29" cy="585.77" r="14.9" fill="url(#seat)" stroke="#a8a8a8" stroke-width="1.7"/>
<text transform="translate(185.89,587.97) scale(0.74,1)" font-family="Liberation Sans, sans-serif" font-size="8.5" font-weight="bold" fill="#000" stroke="#000" stroke-width="0.15" text-anchor="middle">8</text>
<circle cx="142.31" cy="585.77" r="14.9" fill="url(#seat)" stroke="#a8a8a8" stroke-width="1.7"/>
<text transform="translate(141.91,587.97) scale(0.74,1)" font-family="Liberation Sans, sans-serif" font-size="8.5" font-weight="bold" fill="#000" stroke="#000" stroke-width="0.15" text-anchor="middle">9</text>
<circle cx="106.74" cy="559.92" r="14.9" fill="url(#seat)" stroke="#a8a8a8" stroke-width="1.7"/>
<text transform="translate(106.34,562.12) scale(0.74,1)" font-family="Liberation Sans, sans-serif" font-size="8.5" font-weight="bold" fill="#000" stroke="#000" stroke-width="0.15" text-anchor="middle">10</text>
<circle cx="164.3" cy="518.1" r="50.6" fill="url(#tbl)" stroke="#a2a4a2" stroke-width="1.9"/>
<text x="163.70000000000002" y="521.8000000000001" font-family="Liberation Sans, sans-serif" font-size="10.3" fill="#000" text-anchor="middle">Table 4</text>
<text x="164.60000000000002" y="538.7" font-family="Liberation Sans, sans-serif" font-size="11" letter-spacing="0.12" fill="#1818ee" text-anchor="middle">[Edit] [Delete]</text>
<circle cx="502.80" cy="518.10" r="14.9" fill="url(#seat)" stroke="#a8a8a8" stroke-width="1.7"/>
<text transform="translate(502.40,520.30) scale(0.74,1)" font-family="Liberation Sans, sans-serif" font-size="8.5" font-weight="bold" fill="#000" stroke="#000" stroke-width="0.15" text-anchor="middle">1</text>
<circle cx="517.14" cy="476.28" r="14.9" fill="url(#seat)" stroke="#a8a8a8" stroke-width="1.7"/>
<text transform="translate(516.74,478.48) scale(0.74,1)" font-family="Liberation Sans, sans-serif" font-size="8.5" font-weight="bold" fill="#000" stroke="#000" stroke-width="0.15" text-anchor="middle">2</text>
<circle cx="552.71" cy="450.43" r="14.9" fill="url(#seat)" stroke="#a8a8a8" stroke-width="1.7"/>
<text transform="translate(552.31,452.63) scale(0.74,1)" font-family="Liberation Sans, sans-serif" font-size="8.5" font-weight="bold" fill="#000" stroke="#000" stroke-width="0.15" text-anchor="middle">3</text>
<circle cx="596.69" cy="450.43" r="14.9" fill="url(#seat)" stroke="#a8a8a8" stroke-width="1.7"/>
<text transform="translate(596.29,452.63) scale(0.74,1)" font-family="Liberation Sans, sans-serif" font-size="8.5" font-weight="bold" fill="#000" stroke="#000" stroke-width="0.15" text-anchor="middle">4</text>
<circle cx="632.26" cy="476.28" r="14.9" fill="url(#seat)" stroke="#a8a8a8" stroke-width="1.7"/>
<text transform="translate(631.86,478.48) scale(0.74,1)" font-family="Liberation Sans, sans-serif" font-size="8.5" font-weight="bold" fill="#000" stroke="#000" stroke-width="0.15" text-anchor="middle">5</text>
<circle cx="646.60" cy="518.10" r="14.9" fill="url(#seat)" stroke="#a8a8a8" stroke-width="1.7"/>
<text transform="translate(646.20,520.30) scale(0.74,1)" font-family="Liberation Sans, sans-serif" font-size="8.5" font-weight="bold" fill="#000" stroke="#000" stroke-width="0.15" text-anchor="middle">6</text>
<circle cx="632.26" cy="559.92" r="14.9" fill="url(#seat)" stroke="#a8a8a8" stroke-width="1.7"/>
<text transform="translate(631.86,562.12) scale(0.74,1)" font-family="Liberation Sans, sans-serif" font-size="8.5" font-weight="bold" fill="#000" stroke="#000" stroke-width="0.15" text-anchor="middle">7</text>
<circle cx="596.69" cy="585.77" r="14.9" fill="url(#seat)" stroke="#a8a8a8" stroke-width="1.7"/>
<text transform="translate(596.29,587.97) scale(0.74,1)" font-family="Liberation Sans, sans-serif" font-size="8.5" font-weight="bold" fill="#000" stroke="#000" stroke-width="0.15" text-anchor="middle">8</text>
<circle cx="552.71" cy="585.77" r="14.9" fill="url(#seat)" stroke="#a8a8a8" stroke-width="1.7"/>
<text transform="translate(552.31,587.97) scale(0.74,1)" font-family="Liberation Sans, sans-serif" font-size="8.5" font-weight="bold" fill="#000" stroke="#000" stroke-width="0.15" text-anchor="middle">9</text>
<circle cx="517.14" cy="559.92" r="14.9" fill="url(#seat)" stroke="#a8a8a8" stroke-width="1.7"/>
<text transform="translate(516.74,562.12) scale(0.74,1)" font-family="Liberation Sans, sans-serif" font-size="8.5" font-weight="bold" fill="#000" stroke="#000" stroke-width="0.15" text-anchor="middle">10</text>
<circle cx="574.7" cy="518.1" r="50.6" fill="url(#tbl)" stroke="#a2a4a2" stroke-width="1.9"/>
<text x="574.1" y="521.8000000000001" font-family="Liberation Sans, sans-serif" font-size="10.3" fill="#000" text-anchor="middle">Table 5</text>
<text x="575.0" y="538.7" font-family="Liberation Sans, sans-serif" font-size="11" letter-spacing="0.12" fill="#1818ee" text-anchor="middle">[Edit] [Delete]</text>
<rect x="750" y="56" width="2" height="734" fill="#fbfcfd"/>
<rect x="752" y="56" width="16" height="734" fill="#7c8286"/>
<rect x="768" y="56" width="2" height="734" fill="#cdd3d6"/>
<rect x="752" y="56" width="16" height="13" fill="#a4a4a4"/>
<rect x="753" y="57" width="13.5" height="12" fill="#f3f3f3"/>
<rect x="752" y="69" width="16" height="2" fill="#8c8c8c"/>
<path d="M756,64.8 L763.6,64.8 L759.8,60.4 Z" fill="#000"/>
<defs><linearGradient id="thv" x1="0" y1="0" x2="0" y2="1"><stop offset="0" stop-color="#ffffff"/><stop offset="1" stop-color="#e6e6e6"/></linearGradient></defs>
<path d="M753,71 L761,71 Q764,71 764,74 L764,769 L753,769 Z" fill="url(#thv)"/>
<rect x="764" y="71" width="1" height="698" fill="#d2d2d2"/>
<rect x="765" y="71" width="1" height="698" fill="#a6a8a9"/>
<rect x="757" y="416" width="6" height="1.3" fill="#8a8a8a"/><rect x="757" y="418.3" width="6" height="1.3" fill="#8a8a8a"/><rect x="757" y="420.6" width="6" height="1.3" fill="#8a8a8a"/><rect x="757" y="422.6" width="6" height="1.6" fill="#9a9a9a"/>
<path d="M753,768.5 L761,768.5 Q764,768.5 764,765" fill="none" stroke="#8e8e8e" stroke-width="1"/>
<defs><linearGradient id="trk" x1="0" y1="0" x2="1" y2="0"><stop offset="0" stop-color="#8e8e8e"/><stop offset="0.6" stop-color="#b4b4b4"/><stop offset="1" stop-color="#9c9c9c"/></linearGradient></defs>
<rect x="753" y="769" width="13" height="6" fill="url(#trk)"/>
<rect x="752" y="775" width="16" height="15" fill="#a8a8a8"/>
<rect x="753" y="775.5" width="13.5" height="13.5" fill="#f3f3f3"/>
<rect x="766" y="775" width="2" height="15" fill="#8e9294"/>
<path d="M756,781 L764,781 L760,784.7 Z" fill="#000"/>
<rect x="768" y="56" width="2" height="14" fill="#edf2f6"/>
<rect x="770" y="56" width="196" height="735" fill="#dde6ed"/>
<rect x="771" y="57" width="192" height="95" fill="#a5b4b4"/>
<text x="775.5" y="77.1" font-family="Liberation Sans, sans-serif" font-size="12" letter-spacing="0.55" font-weight="bold" fill="#fff">My Event Seating</text>
<text x="775.5" y="92.8" font-family="Liberation Sans, sans-serif" font-size="11.2" letter-spacing="0.5" fill="#fff">5 Tables</text>
<text x="775.5" y="108.6" font-family="Liberation Sans, sans-serif" font-size="11.2" letter-spacing="0.5" fill="#fff">50 Seats</text>
<text x="775.5" y="124.6" font-family="Liberation Sans, sans-serif" font-size="11.2" letter-spacing="0.5" fill="#fff">0 Occupied Seats</text>
<text x="808.3" y="176.8" font-family="Liberation Sans, sans-serif" font-size="12.6" letter-spacing="0.3" font-weight="bold" fill="#52798a">Invited Guests:</text>
<text x="774" y="201" font-family="Liberation Sans, sans-serif" font-size="12.4" letter-spacing="0.15" font-weight="bold" fill="#52798a">Show:</text>
<rect x="821.5" y="186.5" width="132.5" height="21" rx="3" fill="url(#sel)" stroke="#7c8084"/>
<rect x="931.5" y="187" width="1" height="20" fill="#c0c4c6"/>
<path d="M938.3,194.9 L945.3,194.9 L941.8,198.9 Z" fill="#000"/>
<text x="825.5" y="202.3" font-family="Liberation Sans, sans-serif" font-size="11" letter-spacing="-0.1" fill="#000">All Households</text>
<rect x="770" y="223" width="190" height="566" fill="#fff"/>
<rect x="770" y="223" width="190" height="2" fill="#8f9394"/>
<rect x="958.5" y="223" width="1.2" height="566" fill="#c8c8c8"/>
<rect x="770" y="788" width="190" height="1" fill="#c8cccc"/>
<rect x="770" y="243" width="189" height="1.2" fill="#a8acac"/>
<text x="777" y="237.6" font-family="Liberation Sans, sans-serif" font-size="11" fill="#000">Your Party (0/1)</text>
</svg></body></html>
